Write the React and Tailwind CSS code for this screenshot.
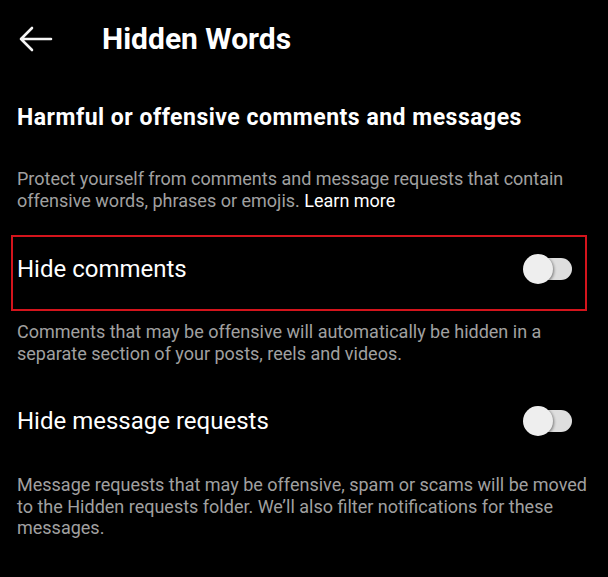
import React from "react";

function Toggle() {
  return (
    <div className="relative h-[30px] w-[49px] shrink-0">
      <div className="absolute right-0 top-[4px] h-[22px] w-[44px] rounded-full bg-[#dedede]" />
      <div className="absolute left-0 top-0 h-[30px] w-[30px] rounded-full bg-[#eeeeee] shadow-[1px_1px_3px_rgba(0,0,0,0.45)]" />
    </div>
  );
}

const body = "text-[18px] leading-[21.5px] text-[#a0a0a0]";

export default function App() {
  return (
    <div
      className="min-h-[577px] w-[608px] bg-black text-white"
      style={{ fontFamily: "Roboto, 'Noto Sans', sans-serif" }}
    >
      <div className="flex h-[78px] items-center">
        <div className="ml-[19px] w-[83px]">
          <svg width="34" height="26" viewBox="0 0 34 26" fill="none" stroke="#f5f5f5" strokeWidth="2.6" strokeLinecap="round" strokeLinejoin="round">
            <path d="M32 13H2M13 2L2 13l11 11" />
          </svg>
        </div>
        <h1 className="text-[30px] font-bold leading-none">Hidden Words</h1>
      </div>

      <div className="px-[17px]">
        <h2 className="mt-[27px] whitespace-nowrap text-[23px] font-bold leading-[26px] tracking-[0.5px]">
          Harmful or offensive comments and messages
        </h2>
        <p className={`mt-[37px] ${body}`}>
          Protect yourself from comments and message requests that contain offensive words, phrases or emojis.{" "}
          <span className="text-white">Learn more</span>
        </p>
      </div>

      <div className="ml-[11px] mr-[21px] mt-[24px] flex h-[76px] items-center justify-between border-2 border-[#d4141c] pb-[9px] pl-[4px] pr-[13px]">
        <span className="text-[24px] leading-none">Hide comments</span>
        <Toggle />
      </div>

      <div className="px-[17px]">
        <p className={`mt-[10px] ${body}`}>
          Comments that may be offensive will automatically be hidden in a separate section of your posts, reels and videos.
        </p>
      </div>

      <div className="mt-[37px] flex h-[40px] items-center justify-between pl-[17px] pr-[36px]">
        <span className="text-[24px] leading-none">Hide message requests</span>
        <Toggle />
      </div>

      <div className="px-[17px]">
        <p className={`mt-[33px] ${body}`}>
          Message requests that may be offensive, spam or scams will be moved to the Hidden requests folder. We’ll also filter notifications for these messages.
        </p>
      </div>
    </div>
  );
}
